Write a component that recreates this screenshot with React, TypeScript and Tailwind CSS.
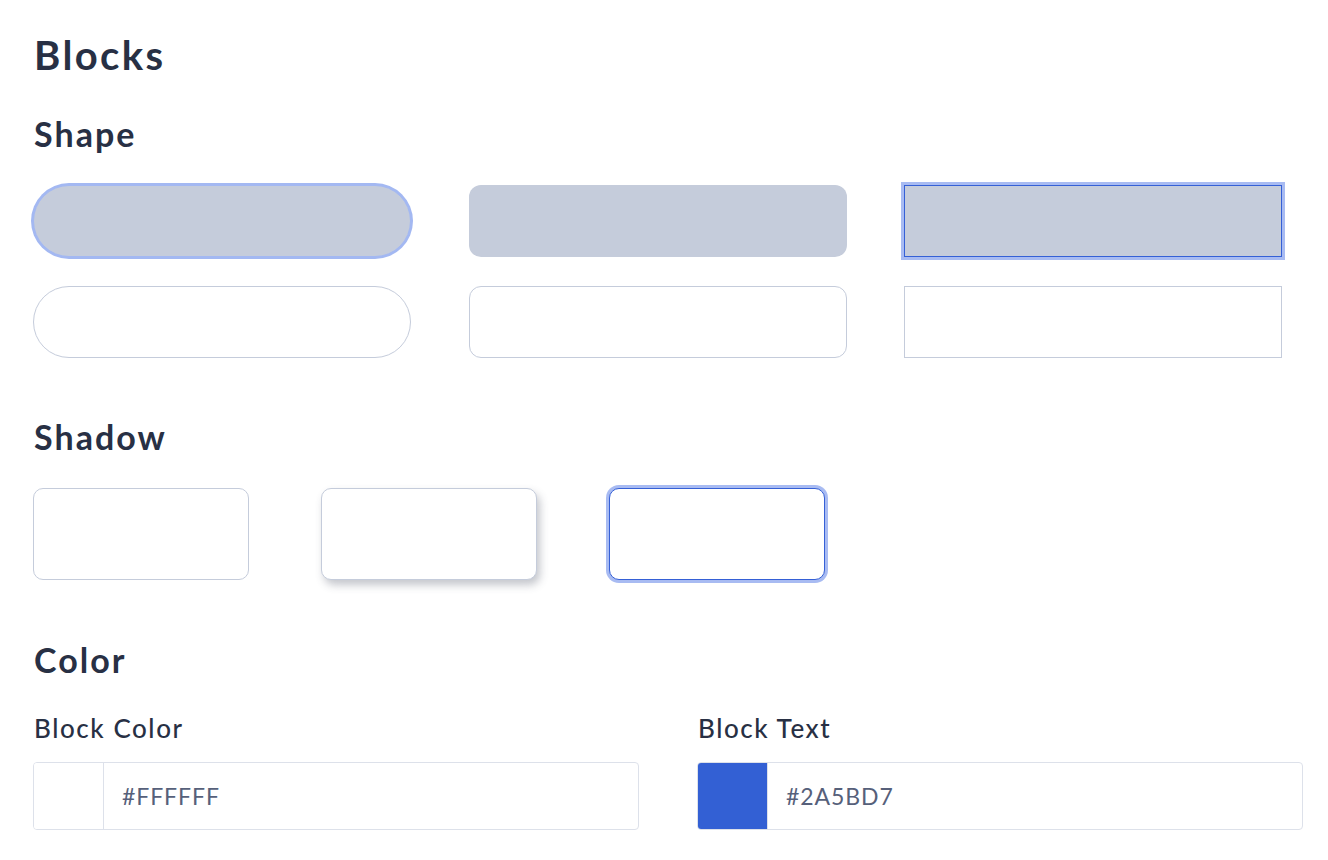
import React from "react";

const font = { fontFamily: "Lato, 'Open Sans', sans-serif" };

const ShapeOption = ({ className }: { className: string }) => (
  <div className={`h-[72px] w-[378px] ${className}`} />
);

const ColorInput = ({ label, swatch, value }: { label: string; swatch: string; value: string }) => (
  <div className="w-[606px] shrink-0">
    <div className="pl-px text-[26px] font-medium leading-[28px] tracking-[0.06em] text-[#283044]">{label}</div>
    <div className="mt-[20px] flex h-[68px] overflow-hidden rounded-[4px] border border-[#dde1ea]">
      <div className={`w-[70px] border-r border-[#dde1ea] ${swatch}`} />
      <div className="flex items-center pl-[18px] text-[23px] tracking-[0.04em] text-[#56607a]">{value}</div>
    </div>
  </div>
);

export default function App() {
  return (
    <div className="min-h-screen bg-white px-[33px] pt-[33px]" style={font}>
      <h1 className="pl-px text-[40px] font-bold leading-[44px] tracking-[0.06em] text-[#283044]">Blocks</h1>

      <h2 className="mt-[39px] pl-px text-[34px] font-bold leading-[36px] tracking-[0.06em] text-[#283044]">Shape</h2>
      <div className="mt-[33px] grid w-[1249px] grid-cols-[378px_378px_378px] justify-between gap-y-[29px]">
        <ShapeOption className="rounded-full border border-[#a3b8f2] bg-[#c5ccdb] shadow-[0_0_0_2px_#a3b8f2]" />
        <ShapeOption className="rounded-[12px] bg-[#c5ccdb]" />
        <ShapeOption className="border border-[#3560d6] bg-[#c5ccdb] shadow-[0_0_0_3px_#a8bbf2]" />
        <ShapeOption className="rounded-full border border-[#c5ccdb] bg-white" />
        <ShapeOption className="rounded-[12px] border border-[#c5ccdb] bg-white" />
        <ShapeOption className="border border-[#c5ccdb] bg-white" />
      </div>

      <h2 className="mt-[61px] pl-px text-[34px] font-bold leading-[36px] tracking-[0.06em] text-[#283044]">Shadow</h2>
      <div className="mt-[33px] flex gap-[72px]">
        <div className="h-[92px] w-[216px] rounded-[10px] border border-[#c5ccdb] bg-white" />
        <div className="h-[92px] w-[216px] rounded-[10px] border border-[#c5ccdb] bg-white shadow-[3px_5px_9px_rgba(60,66,87,0.3)]" />
        <div className="h-[92px] w-[216px] rounded-[10px] border border-[#3560d6] bg-white shadow-[0_0_0_3px_#a8bbf2]" />
      </div>

      <h2 className="mt-[62px] pl-px text-[34px] font-bold leading-[36px] tracking-[0.06em] text-[#283044]">Color</h2>
      <div className="mt-[36px] flex gap-[58px]">
        <ColorInput label="Block Color" swatch="bg-white" value="#FFFFFF" />
        <ColorInput label="Block Text" swatch="bg-[#3360d4]" value="#2A5BD7" />
      </div>
    </div>
  );
}
